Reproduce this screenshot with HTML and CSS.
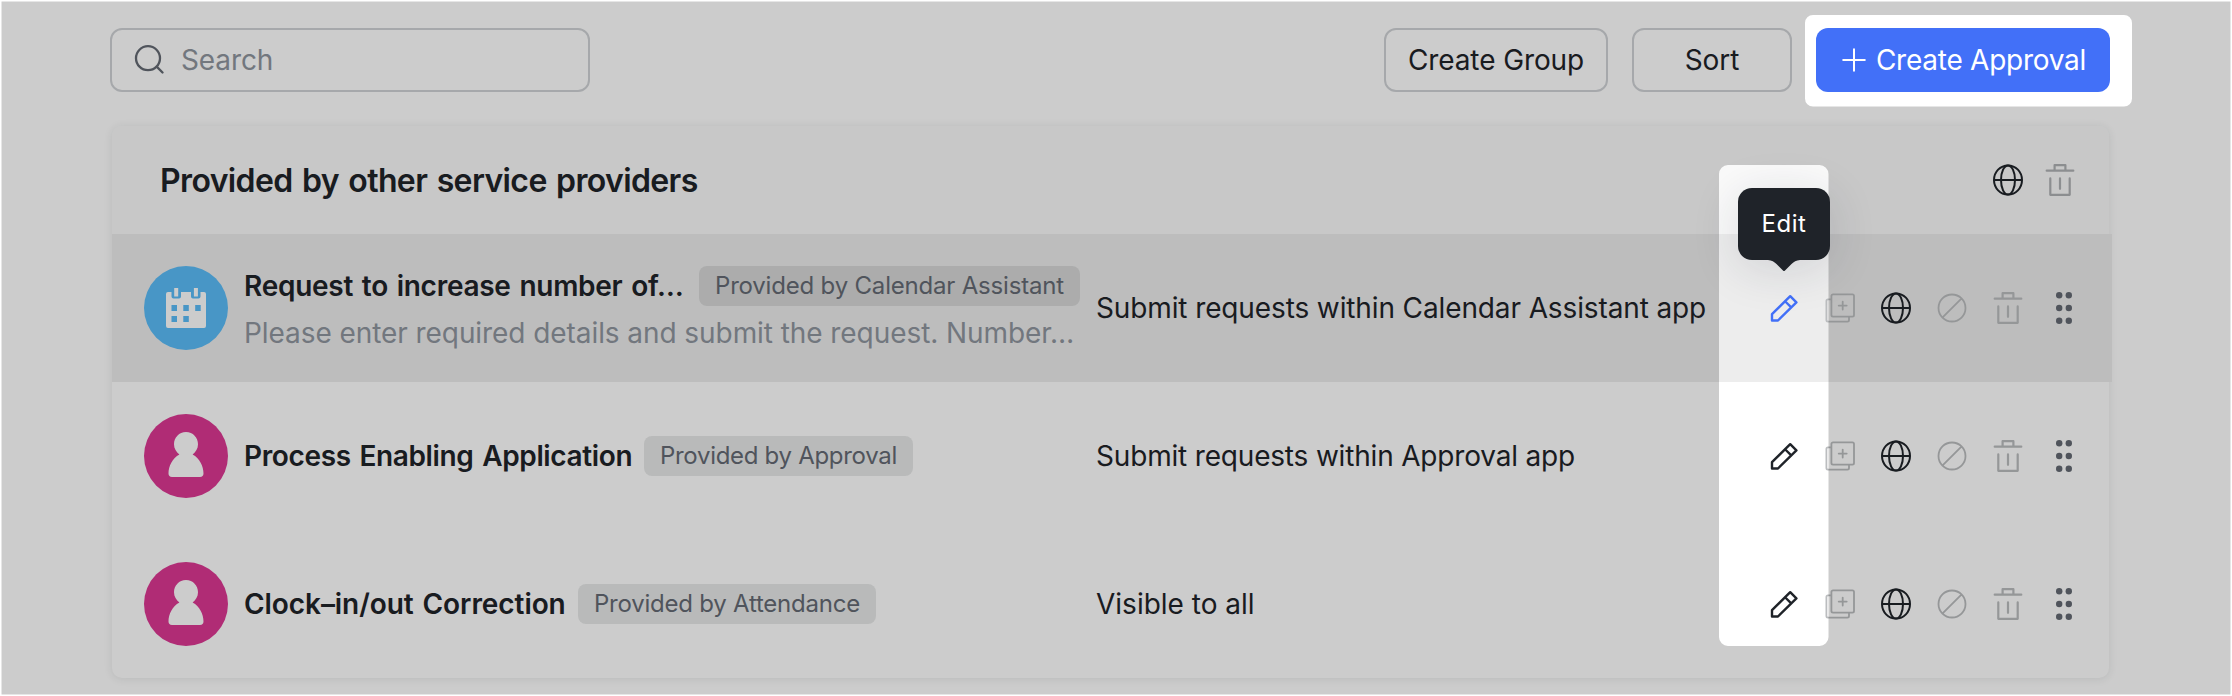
FILE: index.html
```html
<!DOCTYPE html>
<html lang="en">
<head>
  <meta charset="UTF-8" />
  <title>Approval Admin</title>
  <link rel="stylesheet" href="styles.css">
</head>
<body>
  <svg class="sprite" width="0" height="0">
    <symbol id="globe" viewBox="0 0 32 32">
      <g fill="none" stroke="currentColor" stroke-width="2">
        <ellipse cx="16" cy="16" rx="14" ry="14.600"/>
        <ellipse cx="16" cy="16" rx="7" ry="14.600"/>
        <path d="M2 16h28"/>
      </g>
    </symbol>
    <symbol id="trash" viewBox="0 0 32 32">
      <path fill="none" stroke="currentColor" stroke-width="2.2" stroke-linecap="round" stroke-linejoin="round" d="M2.700 6.700h26.600M10.600 6.200V1.200h10.800v5M6.300 14.400v16.400h19.400V14.400M16 14.400v10.400"/>
    </symbol>
    <symbol id="pencil" viewBox="0 0 32 32">
      <path fill="none" stroke="currentColor" stroke-width="2.4" stroke-linejoin="round" d="M22.200 4.200l6.200 6.200L10 28.500H4v-6.300zM17.800 10l5.200 5.200"/>
    </symbol>
    <symbol id="copy" viewBox="0 0 32 32">
      <g fill="none" stroke="currentColor" stroke-width="1.8" stroke-linecap="round">
        <rect x="7.4" y="2.4" width="22.6" height="22.2" rx="1.6"/>
        <path d="M7 7.400H4a1.600 1.600 0 0 0-1.600 1.600v19a1.600 1.600 0 0 0 1.600 1.600h19.400a1.600 1.600 0 0 0 1.600-1.600v-3M18.700 9.600v8M14.700 13.600h8"/>
      </g>
    </symbol>
    <symbol id="ban" viewBox="0 0 32 32">
      <path fill="none" stroke="currentColor" stroke-width="1.8" d="M16 2.500a13.500 13.500 0 1 1 0 27a13.500 13.500 0 1 1 0-27zM6.600 25.400L25.400 6.600"/>
    </symbol>
    <symbol id="drag" viewBox="0 0 32 32">
      <g fill="currentColor">
        <circle cx="11.2" cy="3.2" r="3.2"/><circle cx="20.8" cy="3.2" r="3.2"/>
        <circle cx="11.2" cy="16" r="3.2"/><circle cx="20.8" cy="16" r="3.2"/>
        <circle cx="11.2" cy="28.8" r="3.2"/><circle cx="20.8" cy="28.8" r="3.2"/>
      </g>
    </symbol>
    <symbol id="person" viewBox="0 0 84 84">
      <path fill="#fff" d="M42 18c7 0 12 5.600 12 12.300c0 4.500-2.300 7.700-5.400 10.200c7 3.500 10.900 12 10.900 19c0 2.300-1.300 3.500-3.500 3.500H28c-2.200 0-3.500-1.200-3.500-3.500c0-7 3.900-15.500 10.900-19c-3.100-2.500-5.400-5.700-5.400-10.200C30 23.600 35 18 42 18z"/>
    </symbol>
  </svg>

  <div class="toolbar">
    <div class="search">
      <svg width="32" height="32" viewBox="0 0 32 32"><path fill="none" stroke="#646a73" stroke-width="2.3" stroke-linecap="round" d="M16 2.200a12 12 0 1 1 0 24a12 12 0 1 1 0-24zM24.700 22.600l5.800 5.900"/></svg>
      <span>Search</span>
    </div>
    <div class="buttons">
      <button class="btn btn-group">Create Group</button>
      <button class="btn btn-sort">Sort</button>
      <button class="btn btn-primary">
        <svg width="24" height="24" viewBox="0 0 24 24"><path fill="none" stroke="#fff" stroke-width="2" stroke-linecap="round" d="M12 1.200v21.600M1.200 12h21.600"/></svg>
        <span>Create Approval</span>
      </button>
    </div>
  </div>

  <div class="card">
    <div class="card-header">
      <h2>Provided by other service providers</h2>
      <div class="actions">
        <svg class="icon dark"><use href="#globe"/></svg>
        <svg class="icon header-trash"><use href="#trash"/></svg>
      </div>
    </div>

    <div class="row row-hover calendar">
      <div class="avatar blue">
        <svg width="84" height="84" viewBox="0 0 84 84">
          <path fill="#fff" d="M24.500 26H27.500v4.500a2 2 0 0 0 2 2h5.500a2 2 0 0 0 2-2V26h10v4.500a2 2 0 0 0 2 2h5.500a2 2 0 0 0 2-2V26h3.500a2 2 0 0 1 2 2v32a2 2 0 0 1-2 2h-36a2 2 0 0 1-2-2V28a2 2 0 0 1 2-2z"/>
          <path fill="#fff" d="M30.200 22h4v8.500h-4zM49.900 22h4v8.500h-4z"/>
          <path fill="#5abcf8" d="M27.500 39h5.500v6h-5.500zM39.300 39h5.500v6h-5.500zM51.200 39h5.500v6h-5.500zM27.500 50h5.500v6h-5.500zM39.300 50h5.500v6h-5.500z"/>
        </svg>
      </div>
      <div class="info">
        <div class="name"><span class="title">Request to increase number of…</span><span class="tag">Provided by Calendar Assistant</span></div>
        <div class="desc">Please enter required details and submit the request. Number…</div>
      </div>
      <div class="scope">Submit requests within Calendar Assistant app</div>
      <div class="actions">
        <div class="edit">
          <svg class="icon primary"><use href="#pencil"/></svg>
          <div class="tooltip">Edit
            <svg class="arrow" width="32" height="12" viewBox="0 0 32 12"><path fill="#1f2329" d="M0 0h32c-4 .5-6 1.500-8.500 4L17 10.500q-1 1-2 0L8.500 4C6 1.500 4 .5 0 0z"/></svg>
          </div>
        </div>
        <svg class="icon muted"><use href="#copy"/></svg>
        <svg class="icon dark"><use href="#globe"/></svg>
        <svg class="icon muted"><use href="#ban"/></svg>
        <svg class="icon muted"><use href="#trash"/></svg>
        <svg class="icon handle"><use href="#drag"/></svg>
      </div>
    </div>

    <div class="row process">
      <div class="avatar pink"><svg width="84" height="84"><use href="#person"/></svg></div>
      <div class="info">
        <div class="name"><span class="title">Process Enabling Application</span><span class="tag">Provided by Approval</span></div>
      </div>
      <div class="scope">Submit requests within Approval app</div>
      <div class="actions">
        <svg class="icon dark"><use href="#pencil"/></svg>
        <svg class="icon muted"><use href="#copy"/></svg>
        <svg class="icon dark"><use href="#globe"/></svg>
        <svg class="icon muted"><use href="#ban"/></svg>
        <svg class="icon muted"><use href="#trash"/></svg>
        <svg class="icon handle"><use href="#drag"/></svg>
      </div>
    </div>

    <div class="row clock">
      <div class="avatar pink"><svg width="84" height="84"><use href="#person"/></svg></div>
      <div class="info">
        <div class="name"><span class="title">Clock–in/out Correction</span><span class="tag">Provided by Attendance</span></div>
      </div>
      <div class="scope">Visible to all</div>
      <div class="actions">
        <svg class="icon dark"><use href="#pencil"/></svg>
        <svg class="icon muted"><use href="#copy"/></svg>
        <svg class="icon dark"><use href="#globe"/></svg>
        <svg class="icon muted"><use href="#ban"/></svg>
        <svg class="icon muted"><use href="#trash"/></svg>
        <svg class="icon handle"><use href="#drag"/></svg>
      </div>
    </div>
  </div>

  <!-- dimmed layer with two spotlight cut-outs -->
  <svg class="mask" width="2232" height="696" viewBox="0 0 2232 696">
    <path fill="#000" fill-opacity=".2" fill-rule="evenodd" d="M1.500 1.500H2230.500V694.500H1.500z
      M1813 15a8 8 0 0 0-8 8v75.500a8 8 0 0 0 8 8h311a8 8 0 0 0 8-8V23a8 8 0 0 0-8-8z
      M1728 165a9 9 0 0 0-9 9v463a9 9 0 0 0 9 9h91.500a9 9 0 0 0 9-9V174a9 9 0 0 0-9-9z"/>
  </svg>
</body>
</html>
```

FILE: styles.css
```css
* {
  box-sizing: border-box;
}

body {
  position: relative;
  width: 2232px;
  height: 696px;
  margin: 0;
  padding: 28px 120px 0 110px;
  overflow: hidden;
  background: #fff;
  color: #1f2329;
  font-family: Inter, sans-serif;
  font-size: 28px;
  line-height: 40px;
}

.sprite {
  position: absolute;
}

.toolbar {
  display: flex;
  justify-content: space-between;
  width: 2000px;
  height: 64px;
}

.search {
  display: flex;
  align-items: center;
  gap: 17px;
  width: 480px;
  padding-left: 20px;
  border: 2px solid #d0d3d6;
  border-radius: 12px;
  color: #8f959e;
  letter-spacing: -0.1px;
}

.buttons {
  display: flex;
}

.btn {
  display: flex;
  align-items: center;
  justify-content: center;
  padding: 0;
  border: 2px solid #d0d3d6;
  border-radius: 12px;
  background: #fff;
  color: #1f2329;
  font: inherit;
  letter-spacing: -0.1px;
}

.btn-group {
  width: 224px;
}

.btn-sort {
  width: 160px;
  margin: 0 24px;
}

.btn-primary {
  gap: 10px;
  width: 294px;
  padding-left: 2px;
  border: none;
  background: #4270f8;
  color: #fff;
  letter-spacing: -0.25px;
}

.card {
  width: 1997px;
  height: 552px;
  margin: 34px 0 0 2px;
  border-radius: 10px;
  box-shadow: 0 1px 8px rgba(31, 35, 41, 0.1);
}

.card-header {
  display: flex;
  align-items: center;
  justify-content: space-between;
  height: 108px;
  padding: 0 33px 0 48px;
  border-radius: 10px 10px 0 0;
  background: #fafafa;
}

h2 {
  margin: 2px 0 0;
  font-size: 32px;
  font-weight: 600;
  letter-spacing: -0.63px;
  word-spacing: 2px;
}

.card-header .actions {
  gap: 20px;
}

.row {
  display: flex;
  align-items: center;
  width: 2000px;
  height: 148px;
  padding-left: 32px;
}

.row-hover {
  background: #ededed;
}

.avatar {
  width: 84px;
  height: 84px;
  border-radius: 50%;
}

.avatar svg {
  display: block;
}

.blue {
  background: #5abcf8;
}

.pink {
  background: #dc3893;
}

.info {
  width: 868px;
  padding-left: 16px;
  white-space: nowrap;
}

.name {
  display: flex;
  align-items: center;
  height: 40px;
}

.title {
  font-weight: 600;
  word-spacing: 2px;
}

.tag {
  height: 40px;
  padding: 0 16px;
  margin-left: 12px;
  border-radius: 8px;
  background: rgba(31, 40, 35, 0.1);
  color: #646a73;
  font-size: 24px;
}

.desc {
  height: 44px;
  padding-top: 7px;
  color: #8f959e;
  letter-spacing: -0.07px;
}

.scope {
  width: 672px;
  white-space: nowrap;
}

.calendar .title {
  width: 443px;
  letter-spacing: -0.27px;
}

.calendar .tag {
  letter-spacing: -0.19px;
}

.calendar .scope {
  letter-spacing: -0.12px;
}

.process .title {
  width: 388px;
  letter-spacing: -0.36px;
}

.process .tag {
  letter-spacing: -0.3px;
}

.process .scope {
  letter-spacing: -0.18px;
}

.clock .title {
  width: 322px;
  letter-spacing: -0.07px;
}

.clock .tag {
  letter-spacing: -0.23px;
}

.actions {
  display: flex;
  gap: 24px;
}

.icon {
  display: block;
  width: 32px;
  height: 32px;
}

.edit {
  position: relative;
}

.dark {
  color: #1f2329;
}

.primary {
  color: #4270f8;
}

.muted {
  color: #bbbdbf;
}

.header-trash {
  color: #b0b2b5;
}

.handle {
  color: #646a73;
}

.tooltip {
  position: absolute;
  z-index: 2;
  left: -30px;
  top: -104px;
  width: 92px;
  height: 72px;
  border-radius: 14px;
  background: #1f2329;
  box-shadow: 0 8px 48px rgba(31, 35, 60, 0.14);
  color: #fff;
  font-size: 24px;
  line-height: 72px;
  letter-spacing: 0.5px;
  text-align: center;
}

.arrow {
  position: absolute;
  left: 30px;
  top: 72px;
}

.mask {
  position: absolute;
  left: 0;
  top: 0;
}
```
